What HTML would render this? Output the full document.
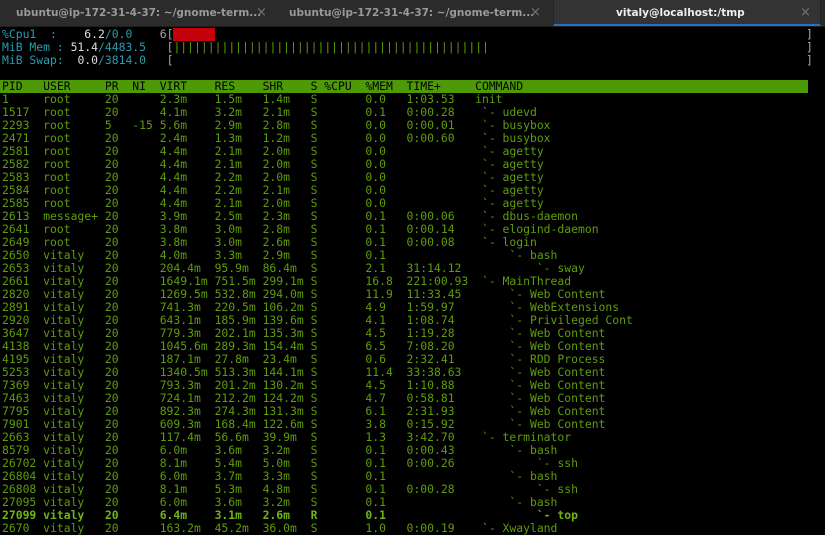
<!DOCTYPE html>
<html><head><meta charset="utf-8"><style>
body{margin:0;width:825px;height:533px;background:#000;overflow:hidden;font-family:"DejaVu Sans Mono","Liberation Mono",monospace;}
.tabs{position:absolute;left:0;top:0;width:825px;height:26px;background:#2b2b2b;border-bottom:1px solid #1e1e1e;font-family:"DejaVu Sans","Liberation Sans",sans-serif;font-size:10.5px;font-weight:bold;}
.tab{position:absolute;top:0;height:26px;line-height:26px;color:#9a9a9a;white-space:nowrap}
.x{position:absolute;top:0;color:#777;font-weight:normal;font-size:13px}
.act{position:absolute;left:553px;top:0;width:266px;height:24px;background:#333;border-bottom:2px solid #2a6fc4;border-left:1px solid #222;border-right:1px solid #222;}
.term{position:absolute;left:2px;top:28px;font-size:11.4px;line-height:13px;color:#5f9c0b;}
.r{height:13px;display:flex;}
.r span{display:inline-block;white-space:pre;flex:none}
.a{width:6ch}.b{width:9ch}.c{width:4ch}.d{width:4ch}.e{width:8ch}.f{width:7ch}.g{width:7ch}.h{width:2ch}.i{width:6ch}.j{width:6ch}.k{width:10ch}
.hd{background:#4e9a06;color:#000;width:806px;margin-left:-2px;padding-left:2px}
.bd{font-weight:bold;color:#6fb514}
.cy{color:#2a9cb0}.w{color:#ddd}
</style></head><body>
<div class="tabs">
<div class="tab" style="left:16px">ubuntu@ip-172-31-4-37: ~/gnome-term...</div><div class="x" style="left:256px;line-height:26px">×</div>
<div class="tab" style="left:289px">ubuntu@ip-172-31-4-37: ~/gnome-term...</div><div class="x" style="left:530px;line-height:26px">×</div>
<div class="act"></div>
<div class="tab" style="left:616px;color:#eee">vitaly@localhost:/tmp</div><div class="x" style="left:800px;line-height:26px">×</div>
</div>
<div class="term">
<div class="r"><span class="cy">%Cpu1  :    </span><span class="w">6.2</span><span class="cy">/0.0    </span><span style="color:#aaa">6[</span><span style="background:#c4000a;width:6ch"> </span></div>
<div class="r"><span class="cy">MiB Mem : </span><span class="w">51.4</span><span class="cy">/4483.5   </span><span style="color:#aaa">[</span><span>||||||||||||||||||||||||||||||||||||||||||||||</span></div>
<div class="r"><span class="cy">MiB Swap:  </span><span class="w">0.0</span><span class="cy">/3814.0   </span><span style="color:#aaa">[</span></div>
<div class="r"></div>
<div class="r hd"><span class="a">PID</span><span class="b">USER</span><span class="c">PR</span><span class="d">NI</span><span class="e">VIRT</span><span class="f">RES</span><span class="g">SHR</span><span class="h">S</span><span class="i">%CPU</span><span class="j">%MEM</span><span class="k">TIME+</span><span>COMMAND</span></div>
<div class="r"><span class="a">1</span><span class="b">root</span><span class="c">20</span><span class="d"></span><span class="e">2.3m</span><span class="f">1.5m</span><span class="g">1.4m</span><span class="h">S</span><span class="i"></span><span class="j">0.0</span><span class="k">1:03.53</span><span>init</span></div>
<div class="r"><span class="a">1517</span><span class="b">root</span><span class="c">20</span><span class="d"></span><span class="e">4.1m</span><span class="f">3.2m</span><span class="g">2.1m</span><span class="h">S</span><span class="i"></span><span class="j">0.1</span><span class="k">0:00.28</span><span> `- udevd</span></div>
<div class="r"><span class="a">2293</span><span class="b">root</span><span class="c">5</span><span class="d">-15</span><span class="e">5.6m</span><span class="f">2.9m</span><span class="g">2.8m</span><span class="h">S</span><span class="i"></span><span class="j">0.0</span><span class="k">0:00.01</span><span> `- busybox</span></div>
<div class="r"><span class="a">2471</span><span class="b">root</span><span class="c">20</span><span class="d"></span><span class="e">2.4m</span><span class="f">1.3m</span><span class="g">1.2m</span><span class="h">S</span><span class="i"></span><span class="j">0.0</span><span class="k">0:00.60</span><span> `- busybox</span></div>
<div class="r"><span class="a">2581</span><span class="b">root</span><span class="c">20</span><span class="d"></span><span class="e">4.4m</span><span class="f">2.1m</span><span class="g">2.0m</span><span class="h">S</span><span class="i"></span><span class="j">0.0</span><span class="k"></span><span> `- agetty</span></div>
<div class="r"><span class="a">2582</span><span class="b">root</span><span class="c">20</span><span class="d"></span><span class="e">4.4m</span><span class="f">2.1m</span><span class="g">2.0m</span><span class="h">S</span><span class="i"></span><span class="j">0.0</span><span class="k"></span><span> `- agetty</span></div>
<div class="r"><span class="a">2583</span><span class="b">root</span><span class="c">20</span><span class="d"></span><span class="e">4.4m</span><span class="f">2.2m</span><span class="g">2.0m</span><span class="h">S</span><span class="i"></span><span class="j">0.0</span><span class="k"></span><span> `- agetty</span></div>
<div class="r"><span class="a">2584</span><span class="b">root</span><span class="c">20</span><span class="d"></span><span class="e">4.4m</span><span class="f">2.2m</span><span class="g">2.1m</span><span class="h">S</span><span class="i"></span><span class="j">0.0</span><span class="k"></span><span> `- agetty</span></div>
<div class="r"><span class="a">2585</span><span class="b">root</span><span class="c">20</span><span class="d"></span><span class="e">4.4m</span><span class="f">2.1m</span><span class="g">2.0m</span><span class="h">S</span><span class="i"></span><span class="j">0.0</span><span class="k"></span><span> `- agetty</span></div>
<div class="r"><span class="a">2613</span><span class="b">message+</span><span class="c">20</span><span class="d"></span><span class="e">3.9m</span><span class="f">2.5m</span><span class="g">2.3m</span><span class="h">S</span><span class="i"></span><span class="j">0.1</span><span class="k">0:00.06</span><span> `- dbus-daemon</span></div>
<div class="r"><span class="a">2641</span><span class="b">root</span><span class="c">20</span><span class="d"></span><span class="e">3.8m</span><span class="f">3.0m</span><span class="g">2.8m</span><span class="h">S</span><span class="i"></span><span class="j">0.1</span><span class="k">0:00.14</span><span> `- elogind-daemon</span></div>
<div class="r"><span class="a">2649</span><span class="b">root</span><span class="c">20</span><span class="d"></span><span class="e">3.8m</span><span class="f">3.0m</span><span class="g">2.6m</span><span class="h">S</span><span class="i"></span><span class="j">0.1</span><span class="k">0:00.08</span><span> `- login</span></div>
<div class="r"><span class="a">2650</span><span class="b">vitaly</span><span class="c">20</span><span class="d"></span><span class="e">4.0m</span><span class="f">3.3m</span><span class="g">2.9m</span><span class="h">S</span><span class="i"></span><span class="j">0.1</span><span class="k"></span><span>     `- bash</span></div>
<div class="r"><span class="a">2653</span><span class="b">vitaly</span><span class="c">20</span><span class="d"></span><span class="e">204.4m</span><span class="f">95.9m</span><span class="g">86.4m</span><span class="h">S</span><span class="i"></span><span class="j">2.1</span><span class="k">31:14.12</span><span>         `- sway</span></div>
<div class="r"><span class="a">2661</span><span class="b">vitaly</span><span class="c">20</span><span class="d"></span><span class="e">1649.1m</span><span class="f">751.5m</span><span class="g">299.1m</span><span class="h">S</span><span class="i"></span><span class="j">16.8</span><span class="k">221:00.93</span><span> `- MainThread</span></div>
<div class="r"><span class="a">2820</span><span class="b">vitaly</span><span class="c">20</span><span class="d"></span><span class="e">1269.5m</span><span class="f">532.8m</span><span class="g">294.0m</span><span class="h">S</span><span class="i"></span><span class="j">11.9</span><span class="k">11:33.45</span><span>     `- Web Content</span></div>
<div class="r"><span class="a">2891</span><span class="b">vitaly</span><span class="c">20</span><span class="d"></span><span class="e">741.3m</span><span class="f">220.5m</span><span class="g">106.2m</span><span class="h">S</span><span class="i"></span><span class="j">4.9</span><span class="k">1:59.97</span><span>     `- WebExtensions</span></div>
<div class="r"><span class="a">2920</span><span class="b">vitaly</span><span class="c">20</span><span class="d"></span><span class="e">643.1m</span><span class="f">185.9m</span><span class="g">139.6m</span><span class="h">S</span><span class="i"></span><span class="j">4.1</span><span class="k">1:08.74</span><span>     `- Privileged Cont</span></div>
<div class="r"><span class="a">3647</span><span class="b">vitaly</span><span class="c">20</span><span class="d"></span><span class="e">779.3m</span><span class="f">202.1m</span><span class="g">135.3m</span><span class="h">S</span><span class="i"></span><span class="j">4.5</span><span class="k">1:19.28</span><span>     `- Web Content</span></div>
<div class="r"><span class="a">4138</span><span class="b">vitaly</span><span class="c">20</span><span class="d"></span><span class="e">1045.6m</span><span class="f">289.3m</span><span class="g">154.4m</span><span class="h">S</span><span class="i"></span><span class="j">6.5</span><span class="k">7:08.20</span><span>     `- Web Content</span></div>
<div class="r"><span class="a">4195</span><span class="b">vitaly</span><span class="c">20</span><span class="d"></span><span class="e">187.1m</span><span class="f">27.8m</span><span class="g">23.4m</span><span class="h">S</span><span class="i"></span><span class="j">0.6</span><span class="k">2:32.41</span><span>     `- RDD Process</span></div>
<div class="r"><span class="a">5253</span><span class="b">vitaly</span><span class="c">20</span><span class="d"></span><span class="e">1340.5m</span><span class="f">513.3m</span><span class="g">144.1m</span><span class="h">S</span><span class="i"></span><span class="j">11.4</span><span class="k">33:38.63</span><span>     `- Web Content</span></div>
<div class="r"><span class="a">7369</span><span class="b">vitaly</span><span class="c">20</span><span class="d"></span><span class="e">793.3m</span><span class="f">201.2m</span><span class="g">130.2m</span><span class="h">S</span><span class="i"></span><span class="j">4.5</span><span class="k">1:10.88</span><span>     `- Web Content</span></div>
<div class="r"><span class="a">7463</span><span class="b">vitaly</span><span class="c">20</span><span class="d"></span><span class="e">724.1m</span><span class="f">212.2m</span><span class="g">124.2m</span><span class="h">S</span><span class="i"></span><span class="j">4.7</span><span class="k">0:58.81</span><span>     `- Web Content</span></div>
<div class="r"><span class="a">7795</span><span class="b">vitaly</span><span class="c">20</span><span class="d"></span><span class="e">892.3m</span><span class="f">274.3m</span><span class="g">131.3m</span><span class="h">S</span><span class="i"></span><span class="j">6.1</span><span class="k">2:31.93</span><span>     `- Web Content</span></div>
<div class="r"><span class="a">7901</span><span class="b">vitaly</span><span class="c">20</span><span class="d"></span><span class="e">609.3m</span><span class="f">168.4m</span><span class="g">122.6m</span><span class="h">S</span><span class="i"></span><span class="j">3.8</span><span class="k">0:15.92</span><span>     `- Web Content</span></div>
<div class="r"><span class="a">2663</span><span class="b">vitaly</span><span class="c">20</span><span class="d"></span><span class="e">117.4m</span><span class="f">56.6m</span><span class="g">39.9m</span><span class="h">S</span><span class="i"></span><span class="j">1.3</span><span class="k">3:42.70</span><span> `- terminator</span></div>
<div class="r"><span class="a">8579</span><span class="b">vitaly</span><span class="c">20</span><span class="d"></span><span class="e">6.0m</span><span class="f">3.6m</span><span class="g">3.2m</span><span class="h">S</span><span class="i"></span><span class="j">0.1</span><span class="k">0:00.43</span><span>     `- bash</span></div>
<div class="r"><span class="a">26702</span><span class="b">vitaly</span><span class="c">20</span><span class="d"></span><span class="e">8.1m</span><span class="f">5.4m</span><span class="g">5.0m</span><span class="h">S</span><span class="i"></span><span class="j">0.1</span><span class="k">0:00.26</span><span>         `- ssh</span></div>
<div class="r"><span class="a">26804</span><span class="b">vitaly</span><span class="c">20</span><span class="d"></span><span class="e">6.0m</span><span class="f">3.7m</span><span class="g">3.3m</span><span class="h">S</span><span class="i"></span><span class="j">0.1</span><span class="k"></span><span>     `- bash</span></div>
<div class="r"><span class="a">26808</span><span class="b">vitaly</span><span class="c">20</span><span class="d"></span><span class="e">8.1m</span><span class="f">5.3m</span><span class="g">4.8m</span><span class="h">S</span><span class="i"></span><span class="j">0.1</span><span class="k">0:00.28</span><span>         `- ssh</span></div>
<div class="r"><span class="a">27095</span><span class="b">vitaly</span><span class="c">20</span><span class="d"></span><span class="e">6.0m</span><span class="f">3.6m</span><span class="g">3.2m</span><span class="h">S</span><span class="i"></span><span class="j">0.1</span><span class="k"></span><span>     `- bash</span></div>
<div class="r bd"><span class="a">27099</span><span class="b">vitaly</span><span class="c">20</span><span class="d"></span><span class="e">6.4m</span><span class="f">3.1m</span><span class="g">2.6m</span><span class="h">R</span><span class="i"></span><span class="j">0.1</span><span class="k"></span><span>         `- top</span></div>
<div class="r"><span class="a">2670</span><span class="b">vitaly</span><span class="c">20</span><span class="d"></span><span class="e">163.2m</span><span class="f">45.2m</span><span class="g">36.0m</span><span class="h">S</span><span class="i"></span><span class="j">1.0</span><span class="k">0:00.19</span><span> `- Xwayland</span></div>
</div>
<div style="position:absolute;left:806px;top:28px;color:#aaa;font-size:11.4px;line-height:13px;font-family:'DejaVu Sans Mono',monospace">]<br>]<br>]</div>
</body></html>
